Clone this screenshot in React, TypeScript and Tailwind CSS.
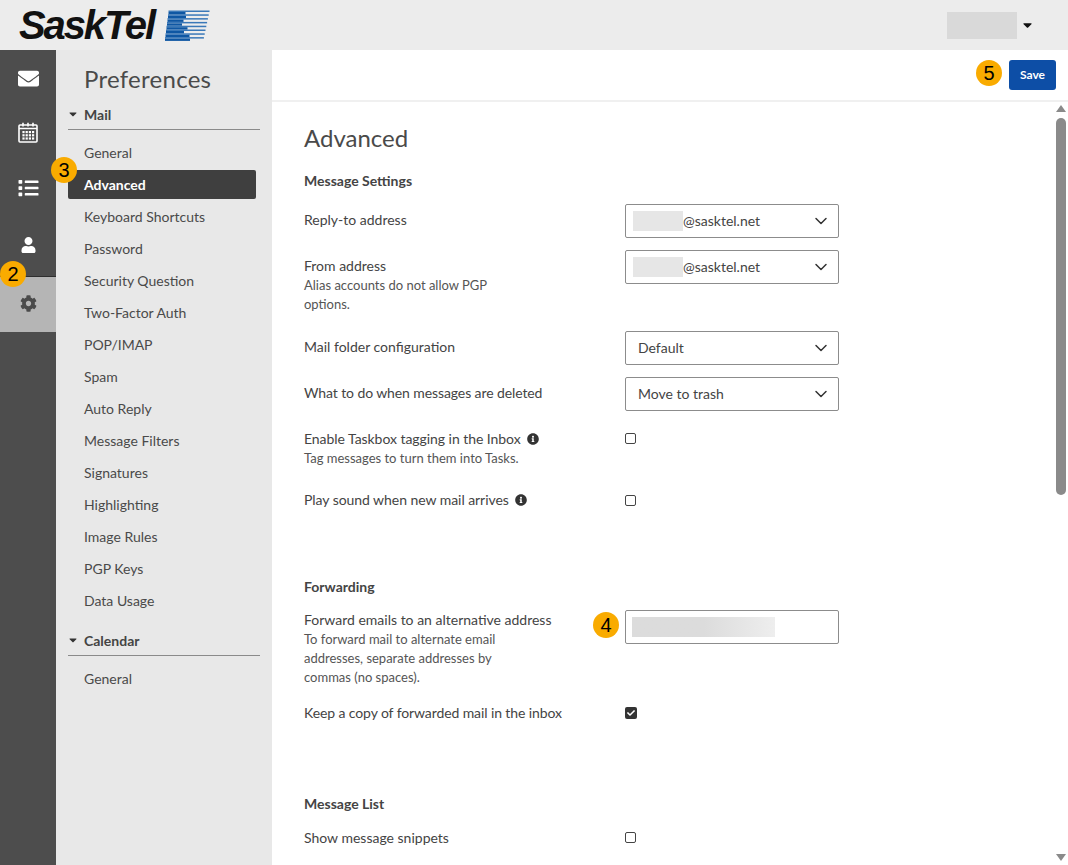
import { ChevronDown } from "lucide-react";
import { FaCaretDown, FaCheck, FaCog, FaEnvelope, FaInfoCircle, FaList, FaUser } from "react-icons/fa";

const MAIL_ITEMS = ["General", "Advanced", "Keyboard Shortcuts", "Password", "Security Question", "Two-Factor Auth", "POP/IMAP", "Spam", "Auto Reply", "Message Filters", "Signatures", "Highlighting", "Image Rules", "PGP Keys", "Data Usage"];

function Badge({ n, className }: { n: number; className: string }) {
  return (
    <div className={"absolute z-10 w-[26px] h-[26px] rounded-full bg-[#f9ab00] flex items-center justify-center text-[20px] leading-none text-black font-['Liberation_Sans',sans-serif] " + className}>
      {n}
    </div>
  );
}

function Flag() {
  const thick = [17, 18, 16, 15, 21, 18, 24, 25];
  return (
    <svg width="46" height="31" viewBox="0 0 46 31" className="ml-[10px] mt-[1px]">
      {[0, 1, 2, 3, 4, 5, 6, 7].map(i => (
        <rect key={i} x={4.5 - i * 0.5} y={0.5 + i * 3.8} width={41 - i * 0.3} height="1.5" fill="#3a78b8" />
      ))}
      {thick.map((w, i) => (
        <rect key={i} x={4.5 - i * 0.5} y={2 + i * 3.8} width={w} height="2.3" fill="#0f57a3" />
      ))}
    </svg>
  );
}

function CalendarIcon() {
  return (
    <svg width="20" height="21" viewBox="0 0 20 21" fill="none">
      <rect x="1" y="3" width="18" height="17" rx="1" stroke="currentColor" strokeWidth="1.6" />
      <path d="M1 6.5h18M5 0.8v3.6M10 0.8v3.6M15 0.8v3.6" stroke="currentColor" strokeWidth="1.6" />
      {[9, 12.2, 15.4].map(y => [4.4, 7.6, 10.8, 14].map(x => (
        <rect key={x + "-" + y} x={x} y={y} width="2.2" height="2.2" fill="currentColor" />
      )))}
    </svg>
  );
}

function RailIcon({ children, active, className = "" }: { children: React.ReactNode; active?: boolean; className?: string }) {
  return (
    <div className={"h-[56px] flex items-center justify-center " + (active ? "bg-[#b5b5b5] text-[#4a4a4a] border-t border-[#2e2e2e] " : "text-white ") + className}>
      {children}
    </div>
  );
}

function SectionHead({ label }: { label: string }) {
  return (
    <div className="h-[29px] ml-[12px] mr-[12px] pb-[2px] border-b border-[#8a8a8a] flex items-center text-[14px] font-bold text-[#444]">
      <FaCaretDown className="w-[10px] h-[12px] ml-0 mr-[6px] text-[#333]" />
      {label}
    </div>
  );
}

function NavItem({ label, active }: { label: string; active?: boolean }) {
  return (
    <div className="h-[32px] flex items-center">
      <div className={"ml-[12px] w-[188px] h-[29px] pl-[16px] flex items-center rounded-[2px] text-[14px] " + (active ? "bg-[#3f3f3f] text-white font-bold" : "text-[#4a4a4a]")}>
        {label}
      </div>
    </div>
  );
}

function Select({ value, masked }: { value: string; masked?: boolean }) {
  return (
    <div className="w-[214px] h-[34px] border border-[#8c8c8c] rounded-[2px] pl-[7px] pr-[7px] flex items-center justify-between text-[14px] text-[#444] shrink-0">
      <div className="flex items-center">
        {masked ? <div className="w-[50px] h-[20px] bg-[#e6e6e6]" /> : <div className="w-[5px]" />}
        <span className="mb-[2px]">{value}</span>
      </div>
      <ChevronDown className="w-[20px] h-[20px] text-[#333]" strokeWidth={1.8} />
    </div>
  );
}

function Check({ checked }: { checked?: boolean }) {
  return checked ? (
    <div className="w-[12px] h-[12px] rounded-[2px] bg-[#333] flex items-center justify-center">
      <FaCheck className="w-[8px] h-[8px] text-white" />
    </div>
  ) : (
    <div className="w-[11px] h-[11px] rounded-[2px] border border-[#444] bg-white" />
  );
}

function Info() {
  return <FaInfoCircle className="inline-block w-[12px] h-[12px] ml-[6px] mb-[2px] text-[#333]" />;
}

function Help({ children }: { children: React.ReactNode }) {
  return <div className="text-[13px] leading-[19px] text-[#555]">{children}</div>;
}

export default function App() {
  return (
    <div className="w-[1068px] h-[865px] overflow-hidden flex flex-col bg-white font-['Lato',sans-serif]">
      <header className="h-[50px] shrink-0 bg-[#ececec] flex items-center justify-between">
        <div className="flex items-center pl-[19px]">
          <span className="font-['Liberation_Sans',sans-serif] italic font-bold text-[40px] leading-none tracking-[-2.1px] text-[#111]">SaskTel</span>
          <Flag />
        </div>
        <div className="flex items-center mr-[34px]">
          <div className="w-[70px] h-[27px] bg-[#d9d9d9]" />
          <FaCaretDown className="w-[13px] h-[14px] ml-[4px] text-[#111]" />
        </div>
      </header>

      <div className="flex-1 flex min-h-0">
        <nav className="relative w-[56px] shrink-0 bg-[#4d4d4d] flex flex-col">
          <RailIcon><FaEnvelope className="w-[21px] h-[21px]" /></RailIcon>
          <RailIcon className="pb-[4px]"><CalendarIcon /></RailIcon>
          <RailIcon className="pb-[4px]"><FaList className="w-[21px] h-[20px]" /></RailIcon>
          <RailIcon className="pb-[2px]"><FaUser className="w-[17px] h-[16px]" /></RailIcon>
          <div className="h-[2px]" />
          <RailIcon active className="pb-[2px]"><FaCog className="w-[17px] h-[17px]" /></RailIcon>
          <Badge n={2} className="left-[0px] top-[211px]" />
        </nav>

        <aside className="relative w-[216px] shrink-0 bg-[#e8e8e8]">
          <div className="h-[51px] pl-[28px] pt-[13px] text-[24px] tracking-[0.27px] leading-[32px] text-[#4a4a4a]">Preferences</div>
          <SectionHead label="Mail" />
          <div className="pt-[6px]">
            {MAIL_ITEMS.map(m => <NavItem key={m} label={m} active={m === "Advanced"} />)}
          </div>
          <div className="pt-[11px]">
            <SectionHead label="Calendar" />
          </div>
          <div className="pt-[6px]">
            <NavItem label="General" />
          </div>
          <Badge n={3} className="left-[-5px] top-[107px]" />
        </aside>

        <main className="flex-1 min-w-0 flex flex-col bg-white">
          <div className="h-[52px] shrink-0 border-b-2 border-[#f0f0f0] flex items-center justify-end pr-[12px] pb-[1px]">
            <div className="w-[26px] h-[26px] mb-[4px] rounded-full bg-[#f9ab00] flex items-center justify-center text-[20px] leading-none text-black font-['Liberation_Sans',sans-serif] mr-[7px]">5</div>
            <div className="w-[47px] h-[30px] rounded-[3px] bg-[#0d4ea6] text-white text-[12px] font-bold flex items-center justify-center">Save</div>
          </div>

          <div className="flex-1 flex min-h-0">
            <div className="flex-1 min-w-0 overflow-hidden pl-[32px] text-[14px] text-[#444]">
              <h1 className="mt-[20px] text-[24px] leading-[32px] text-[#4a4a4a]">Advanced</h1>
              <h2 className="mt-[17px] h-[20px] leading-[20px] font-bold">Message Settings</h2>

              <div className="mt-[13px] flex items-center">
                <div className="w-[321px] pb-[4px]">Reply-to address</div>
                <Select value="@sasktel.net" masked />
              </div>

              <div className="mt-[12px] flex">
                <div className="w-[321px] pt-[6px]">
                  <div className="leading-[20px]">From address</div>
                  <div className="w-[200px]"><Help>Alias accounts do not allow PGP options.</Help></div>
                </div>
                <Select value="@sasktel.net" masked />
              </div>

              <div className="mt-[17px] flex items-center">
                <div className="w-[321px] pb-[4px]">Mail folder configuration</div>
                <Select value="Default" />
              </div>

              <div className="mt-[12px] flex items-center">
                <div className="w-[321px] pb-[4px] tracking-[-0.1px]">What to do when messages are deleted</div>
                <Select value="Move to trash" />
              </div>

              <div className="mt-[18px] flex">
                <div className="w-[321px]">
                  <div className="leading-[20px] tracking-[-0.05px]">Enable Taskbox tagging in the Inbox<Info /></div>
                  <Help>Tag messages to turn them into Tasks.</Help>
                </div>
                <div className="pt-[4px]"><Check /></div>
              </div>

              <div className="mt-[21px] flex items-center h-[20px]">
                <div className="w-[321px] tracking-[-0.05px]">Play sound when new mail arrives<Info /></div>
                <div className="mt-[2px]"><Check /></div>
              </div>

              <h2 className="mt-[68px] h-[20px] leading-[20px] font-bold">Forwarding</h2>

              <div className="mt-[13px] flex">
                <div className="w-[321px]">
                  <div className="leading-[20px]">Forward emails to an alternative address</div>
                  <div className="w-[200px]"><Help>To forward mail to alternate email addresses, separate addresses by commas (no spaces).</Help></div>
                </div>
                <div className="relative w-[214px] h-[34px] border border-[#8c8c8c] rounded-[2px] pl-[6px] flex items-center shrink-0">
                  <div className="w-[143px] h-[20px] bg-gradient-to-r from-[#dcdcdc] via-[#dcdcdc] to-[#eeeeee]" />
                  <Badge n={4} className="left-[-33px] top-[1px]" />
                </div>
              </div>

              <div className="mt-[15px] flex items-center h-[20px]">
                <div className="w-[321px] tracking-[-0.1px]">Keep a copy of forwarded mail in the inbox</div>
                <div className="mt-[1px]"><Check checked /></div>
              </div>

              <h2 className="mt-[72px] h-[20px] leading-[20px] font-bold">Message List</h2>

              <div className="mt-[13px] flex items-center h-[20px]">
                <div className="w-[321px]">Show message snippets</div>
                <Check />
              </div>
            </div>

            <div className="w-[10px] shrink-0 mr-[2px] flex flex-col items-center pt-[3px] pb-[4px]">
              <div className="w-0 h-0 border-l-[5px] border-r-[5px] border-b-[7px] border-l-transparent border-r-transparent border-b-[#8a8a8a]" />
              <div className="mt-[6px] w-[10px] h-[377px] rounded-full bg-[#8a8a8a]" />
              <div className="flex-1" />
              <div className="w-0 h-0 border-l-[5px] border-r-[5px] border-t-[7px] border-l-transparent border-r-transparent border-t-[#8a8a8a]" />
            </div>
          </div>
        </main>
      </div>
    </div>
  );
}
